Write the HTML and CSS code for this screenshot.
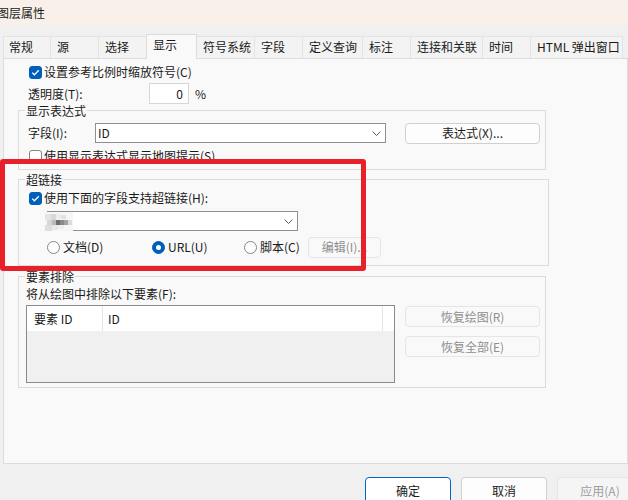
FILE: index.html
```html
<!DOCTYPE html>
<html lang="zh-CN">
<head>
<meta charset="utf-8">
<title>图层属性</title>
<link rel="stylesheet" href="styles.css">
</head>
<body>
<div class="window">
  <div class="titlebar">图层属性</div>
  <div class="tabs">
    <div class="tab w48 first">常规</div>
    <div class="tab w49">源</div>
    <div class="tab w49">选择</div>
    <div class="tab w51 active">显示</div>
    <div class="tab w59">符号系统</div>
    <div class="tab w49">字段</div>
    <div class="tab w61">定义查询</div>
    <div class="tab w49">标注</div>
    <div class="tab w73">连接和关联</div>
    <div class="tab w49">时间</div>
    <div class="tab w93">HTML 弹出窗口</div>
  </div>
  <div class="panel">
    <div class="row-scale">
      <span class="cb on"><svg width="11" height="11" viewBox="0 0 11 11"><path d="M2.2 5.6 L4.4 7.8 L8.8 3.3" fill="none" stroke="#fff" stroke-width="1.3"/></svg></span>
      <span>设置参考比例时缩放符号(C)</span>
    </div>
    <div class="row-trans">
      <span class="lbl-trans">透明度(T):</span>
      <span class="num">0</span>
      <span class="pct">%</span>
    </div>

    <fieldset class="grp g1">
      <legend>显示表达式</legend>
      <div class="field-row">
        <span class="lbl-field">字段(I):</span>
        <div class="select s-field">
          <span>ID</span>
          <svg class="chev" width="9" height="5" viewBox="0 0 9 5"><path d="M0.5 0.5 L4.5 4.5 L8.5 0.5" fill="none" stroke="#606060" stroke-width="1"/></svg>
        </div>
        <div class="btn b-expr">表达式(X)...</div>
      </div>
      <div class="check-row">
        <span class="cb"></span>
        <span>使用显示表达式显示地图提示(S)</span>
      </div>
    </fieldset>

    <fieldset class="grp g2">
      <legend>超链接</legend>
      <div class="check-row tight">
        <span class="cb on"><svg width="11" height="11" viewBox="0 0 11 11"><path d="M2.2 5.6 L4.4 7.8 L8.8 3.3" fill="none" stroke="#fff" stroke-width="1.3"/></svg></span>
        <span>使用下面的字段支持超链接(H):</span>
      </div>
      <div class="link-row">
        <div class="select s-link">
          <svg class="mosaic" width="28" height="19" viewBox="0 0 28 19">
            <rect x="0" y="0" width="28" height="19" fill="#f6f6f6"/>
            <rect x="0" y="2" width="6" height="6" fill="#e4e4e4"/>
            <rect x="6" y="2" width="5" height="6" fill="#d8d8d8"/>
            <rect x="11" y="2" width="5" height="5" fill="#ececec"/>
            <rect x="16" y="3" width="5" height="4" fill="#e2e2e2"/>
            <rect x="2" y="8" width="5" height="5" fill="#d6d6d6"/>
            <rect x="7" y="8" width="4" height="5" fill="#b8b8b8"/>
            <rect x="11" y="8" width="4" height="5" fill="#6e6e6e"/>
            <rect x="15" y="8" width="4" height="5" fill="#8a8a8a"/>
            <rect x="19" y="8" width="4" height="5" fill="#a2a2a2"/>
            <rect x="23" y="8" width="4" height="5" fill="#dcdcdc"/>
            <rect x="0" y="13" width="7" height="6" fill="#dedede"/>
            <rect x="7" y="13" width="6" height="5" fill="#e9e9e9"/>
            <rect x="13" y="13" width="6" height="4" fill="#eeeeee"/>
          </svg>
          <svg class="chev" width="9" height="5" viewBox="0 0 9 5"><path d="M0.5 0.5 L4.5 4.5 L8.5 0.5" fill="none" stroke="#606060" stroke-width="1"/></svg>
        </div>
      </div>
      <div class="radio-row">
        <div class="ro ro1"><span class="rd"></span><span>文档(D)</span></div>
        <div class="ro ro2"><span class="rd on"></span><span>URL(U)</span></div>
        <div class="ro ro3"><span class="rd"></span><span>脚本(C)</span></div>
        <div class="btn disabled b-edit">编辑(I)...</div>
      </div>
    </fieldset>

    <fieldset class="grp g3">
      <legend>要素排除</legend>
      <div class="ex-label">将从绘图中排除以下要素(F):</div>
      <div class="ex-row">
        <div class="list">
          <div class="list-head">
            <div class="col c1">要素 ID</div>
            <div class="col c2">ID</div>
          </div>
        </div>
        <div class="ex-buttons">
          <div class="btn disabled b-restore">恢复绘图(R)</div>
          <div class="btn disabled b-restore b-second">恢复全部(E)</div>
        </div>
      </div>
    </fieldset>
  </div>

  <div class="footer">
    <div class="btn fbtn primary">确定</div>
    <div class="btn fbtn">取消</div>
    <div class="btn fbtn disabled">应用(A)</div>
  </div>

  <div class="annot"></div>
</div>
</body>
</html>
```

FILE: styles.css
```css
* { box-sizing: border-box; }
html, body { margin: 0; padding: 0; }
body {
  width: 628px;
  height: 500px;
  overflow: hidden;
  background: #f0f0f0;
  font-family: "Noto Sans CJK SC", "Microsoft YaHei", sans-serif;
  font-size: 12px;
  line-height: 16px;
  color: #1a1a1a;
}
.window { position: relative; width: 628px; height: 500px; overflow: hidden; }

.titlebar {
  height: 25px;
  line-height: 25px;
  background: #f9f1e9;
  text-indent: -3px;
  color: #1a1a1a;
}

.tabs {
  display: flex;
  align-items: flex-end;
  height: 34px;
  padding-left: 3px;
  margin-bottom: -1px;
  position: relative;
  z-index: 1;
}
.tab {
  height: 22px;
  line-height: 20px;
  margin-bottom: 1px;
  margin-left: -1px;
  padding-left: 6px;
  border: 1px solid #e3e3e3;
  border-bottom: none;
  background: #f3f3f3;
  white-space: nowrap;
  flex: none;
}
.tab.first { margin-left: 0; padding-left: 5px; }
.tab.active {
  height: 25px;
  margin-bottom: 0;
  background: #f9f9f9;
  border-color: #dcdcdc;
  position: relative;
  z-index: 2;
}
.w48 { width: 48px; }
.w49 { width: 49px; }
.w51 { width: 51px; }
.w59 { width: 59px; }
.w61 { width: 61px; }
.w73 { width: 73px; }
.w93 { width: 93px; }

.panel {
  margin-left: 3px;
  width: 625px;
  height: 406px;
  border: 1px solid #dcdcdc;
  background: #f9f9f9;
}

.cb {
  width: 13px;
  height: 13px;
  border: 1px solid #858585;
  border-radius: 3px;
  background: #fff;
  margin-right: 2px;
  flex: none;
  display: flex;
  align-items: center;
  justify-content: center;
}
.cb.on { background: #005fb8; border-color: #005fb8; }

.row-scale {
  display: flex;
  align-items: center;
  height: 20px;
  margin-top: 3px;
  padding-left: 25px;
}
.row-trans {
  display: flex;
  align-items: center;
  height: 21px;
  margin-top: 1px;
  padding-left: 24px;
}
.lbl-trans { width: 121px; }
.num {
  width: 40px;
  height: 21px;
  border: 1px solid #d6d6d6;
  background: #fff;
  text-align: right;
  padding-right: 5px;
  line-height: 19px;
}
.pct { margin-left: 6px; }

.grp {
  margin: 0 0 0 14px;
  padding: 0 0 0 6px;
  border: 1px solid #dcdcdc;
  min-width: 0;
}
.grp legend {
  padding: 2px 1px 0;
  line-height: 16px;
}
.g1 { width: 528px; margin-top: -3px; padding-bottom: 3px; }
.g2 { width: 531px; margin-top: 0; padding-bottom: 7px; }
.g3 { width: 528px; margin-top: 1px; padding-bottom: 4px; }

.field-row {
  display: flex;
  align-items: center;
  height: 22px;
  margin-top: 3px;
}
.lbl-field { width: 67px; margin-left: 3px; flex: none; }
.select {
  height: 20px;
  border: 1px solid #8f8f8f;
  background: #fff;
  display: flex;
  align-items: center;
  justify-content: space-between;
  padding: 0 4px 0 2px;
  line-height: 18px;
  flex: none;
}
.s-field { width: 291px; }
.chev { flex: none; }

.btn {
  height: 21px;
  border: 1px solid #d0d0d0;
  border-radius: 4px;
  background: #fdfdfd;
  display: flex;
  align-items: center;
  justify-content: center;
  line-height: 16px;
  flex: none;
  white-space: nowrap;
}
.btn.disabled {
  border-color: #e5e5e5;
  background: #f9f9f9;
  color: #8f8f8f;
}
.b-expr { width: 135px; margin-left: 19px; }

.check-row {
  display: flex;
  align-items: center;
  height: 20px;
  margin-top: 2px;
  padding-left: 4px;
}
.check-row.tight { margin-top: 0; }

.link-row { display: flex; margin-top: 3px; }
.s-link { width: 251px; margin-left: 22px; padding-left: 0; }
.mosaic { margin-left: -3px; margin-top: 1px; }

.radio-row {
  display: flex;
  align-items: center;
  height: 22px;
  margin-top: 5px;
}
.ro { display: flex; align-items: center; flex: none; }
.ro1 { margin-left: 22px; width: 105px; }
.ro2 { width: 92px; }
.ro3 { width: 64px; }
.rd {
  width: 13px;
  height: 13px;
  border-radius: 50%;
  border: 1px solid #858585;
  background: #fff;
  margin-right: 3px;
  flex: none;
  display: flex;
  align-items: center;
  justify-content: center;
}
.rd.on { background: #005fb8; border-color: #005fb8; }
.rd.on::after {
  content: "";
  width: 5px;
  height: 5px;
  border-radius: 50%;
  background: #fff;
}
.b-edit { width: 73px; }

.ex-label { height: 18px; line-height: 18px; margin-left: 1px; }
.ex-row { display: flex; margin-top: 2px; }
.list {
  width: 369px;
  height: 78px;
  margin-left: 1px;
  border: 1px solid #868a91;
  background: #f0f0f0;
  flex: none;
}
.list-head { display: flex; height: 25px; background: #fff; }
.col { height: 25px; line-height: 25px; border-right: 1px solid #e5e5e5; }
.c1 { width: 76px; padding-left: 7px; }
.c2 { width: 280px; padding-left: 5px; }
.ex-buttons { margin-left: 10px; width: 135px; }
.b-restore { width: 135px; margin-top: 1px; }
.b-restore.b-second { margin-top: 9px; }

.footer {
  display: flex;
  gap: 10px;
  margin-top: 13px;
  padding-left: 365px;
}
.fbtn { width: 86px; height: 28px; }
.fbtn.primary { border-color: #0067c0; background: #fff; }
.fbtn.disabled { background: #f5f5f5; color: #9d9d9d; }

.annot {
  position: absolute;
  left: 0;
  top: 159px;
  width: 366px;
  height: 112px;
  border: 5px solid #e8202a;
  border-radius: 3px;
}
```
